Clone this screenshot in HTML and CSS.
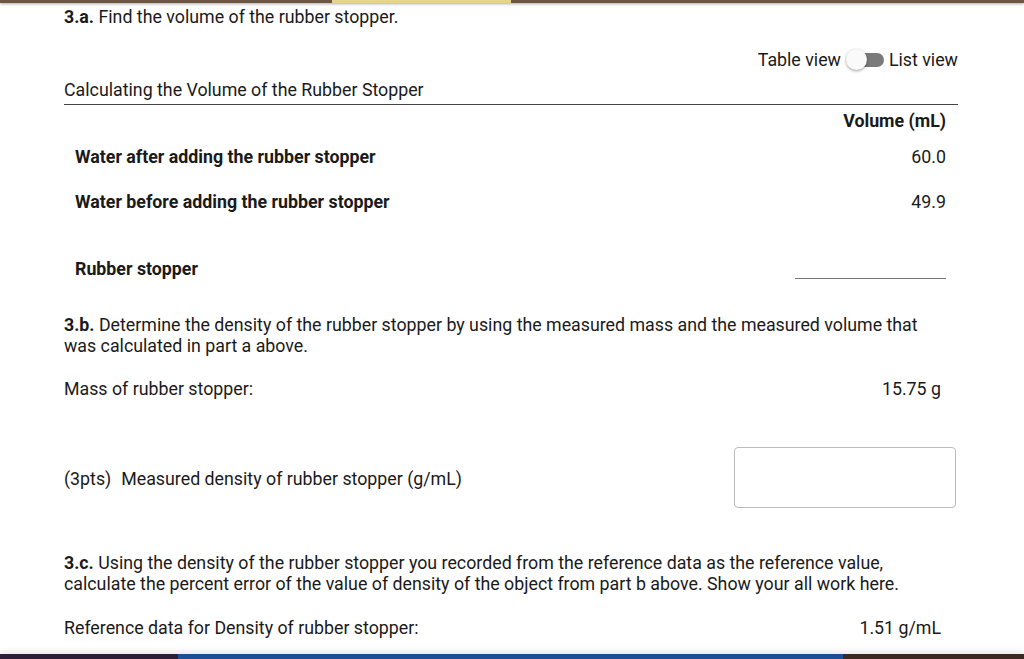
FILE: index.html
```html
<!DOCTYPE html>
<html>
<head>
<meta charset="utf-8">
<link rel="stylesheet" href="styles.css">
</head>
<body>
<div class="topbar"><div class="topbar-left"></div><div class="topbar-tab"></div><div class="topbar-right"></div></div>
<main class="page">
  <p class="question q-a"><b>3.a.</b><span> Find the volume of the rubber stopper.</span></p>
  <div class="toggle-row">
    <span>Table view</span>
    <span class="toggle"><span class="track"></span><span class="knob"></span></span>
    <span>List view</span>
  </div>
  <h2 class="table-title">Calculating the Volume of the Rubber Stopper</h2>
  <div class="table">
    <div class="row head"><span></span><span class="val">Volume (mL)</span></div>
    <div class="row r1"><span class="lbl">Water after adding the rubber stopper</span><span class="val num">60.0</span></div>
    <div class="row r2"><span class="lbl">Water before adding the rubber stopper</span><span class="val num">49.9</span></div>
    <div class="row r3"><span class="lbl">Rubber stopper</span><span class="blank"></span></div>
  </div>
  <p class="question q-b"><b>3.b.</b><span> Determine the density of the rubber stopper by using the measured mass and the measured volume that was calculated in part a above.</span></p>
  <div class="kv mass"><span>Mass of rubber stopper:</span><span class="kv-val">15.75 g</span></div>
  <div class="answer-row"><span><span class="pts">(3pts)</span><span>Measured density of rubber stopper (g/mL)</span></span><span class="input"></span></div>
  <p class="question q-c"><b>3.c.</b><span> Using the density of the rubber stopper you recorded from the reference data as the reference value, calculate the percent error of the value of density of the object from part b above. Show your all work here.</span></p>
  <div class="kv ref"><span>Reference data for Density of rubber stopper:</span><span class="kv-val">1.51 g/mL</span></div>
</main>
<div class="bottombar"><div class="bb-left"></div><div class="bb-mid"></div><div class="bb-right"></div></div>
</body>
</html>
```

FILE: styles.css
```css
* { box-sizing: border-box; }
html, body { margin: 0; padding: 0; }
body {
  width: 1024px;
  height: 659px;
  overflow: hidden;
  background: #fff;
  font-family: Roboto, "Liberation Sans", sans-serif;
  font-size: 17.8px;
  line-height: 22px;
  color: #1a1a1a;
  position: relative;
}
.topbar {
  display: flex;
  height: 3px;
  box-shadow: 0 1px 3px rgba(0,0,0,0.35);
}
.topbar-left { width: 332px; background: #6e5641; }
.topbar-tab { width: 179px; background: #e9d18f; }
.topbar-right { flex: 1; background: #6e5641; }
.page {
  padding: 0 66px 0 64px;
}
.question { margin: 0; line-height: 21px; }
.question b { font-weight: 700; }
.q-a { margin-top: 3px; line-height: 22px; }
.toggle-row {
  display: flex;
  justify-content: flex-end;
  align-items: center;
  margin-top: 21px;
  height: 22px;
}
.toggle {
  position: relative;
  width: 38px;
  height: 22px;
  margin: 0 5px 0 5px;
}
.track {
  position: absolute;
  left: 9px;
  right: 0;
  top: 4px;
  height: 14px;
  background: #7a7a7a;
  border-radius: 7px;
}
.knob {
  position: absolute;
  left: 0;
  top: 0;
  width: 21px;
  height: 21px;
  border-radius: 50%;
  background: #fafafa;
  box-shadow: 0 1px 3px rgba(0,0,0,0.4);
}
.table-title {
  margin: 8px 0 0;
  font-size: 17.8px;
  font-weight: 400;
  line-height: 22px;
  padding-bottom: 3px;
  border-bottom: 1.5px solid #444;
}
.table { padding: 0 12px 0 11px; }
.row {
  display: flex;
  justify-content: space-between;
  align-items: center;
  font-weight: 700;
  height: 22px;
}
.row.head { margin-top: 4.5px; }
.row.r1 { margin-top: 14px; }
.row.r2 { margin-top: 23px; }
.row.r3 { margin-top: 45px; align-items: flex-end; }
.val.num { font-weight: 400; }
.blank {
  width: 151px;
  border-bottom: 1px solid #777;
  margin-bottom: 1px;
}
.q-b { margin-top: 34.5px; max-width: 880px; }
.kv {
  display: flex;
  justify-content: space-between;
  padding-right: 17px;
  line-height: 22px;
}
.mass { margin-top: 21.5px; }
.answer-row {
  display: flex;
  justify-content: space-between;
  align-items: center;
  margin-top: 47px;
}
.answer-row > span:first-child { margin-top: 4px; }
.pts { margin-right: 10px; }
.input {
  width: 222px;
  height: 61px;
  border: 1px solid #bcbcbc;
  border-radius: 4px;
  margin-right: 2px;
}
.q-c { margin-top: 44.5px; }
.ref { margin-top: 22.5px; }
.bottombar {
  position: absolute;
  left: 0; right: 0; bottom: 0;
  height: 5px;
  display: flex;
  box-shadow: 0 -2px 6px rgba(0,0,0,0.12);
}
.bb-left { width: 178px; background: #2d1d38; }
.bb-mid { width: 665px; background: #1d4f96; }
.bb-right { flex: 1; background: #3c2a22; }
```
